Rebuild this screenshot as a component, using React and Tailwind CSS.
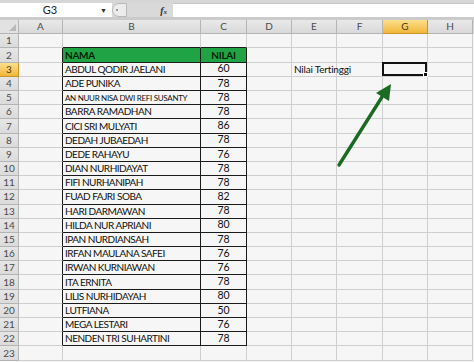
import React from 'react'

const COLS = ['A', 'B', 'C', 'D', 'E', 'F', 'G', 'H']

// data tabel nilai (baris 3 s/d 22)
const DATA = [
  ['ABDUL QODIR JAELANI', 60],
  ['ADE PUNIKA', 78],
  ['AN NUUR NISA DWI REFI SUSANTY', 78],
  ['BARRA RAMADHAN', 78],
  ['CICI SRI MULYATI', 86],
  ['DEDAH JUBAEDAH', 78],
  ['DEDE RAHAYU', 76],
  ['DIAN NURHIDAYAT', 78],
  ['FIFI NURHANIPAH', 78],
  ['FUAD FAJRI SOBA', 82],
  ['HARI DARMAWAN', 78],
  ['HILDA NUR APRIANI', 80],
  ['IPAN NURDIANSAH', 78],
  ['IRFAN MAULANA SAFEI', 76],
  ['IRWAN KURNIAWAN', 76],
  ['ITA ERNITA', 78],
  ['LILIS NURHIDAYAH', 80],
  ['LUTFIANA', 50],
  ['MEGA LESTARI', 76],
  ['NENDEN TRI SUHARTINI', 78],
]

const font = { fontFamily: 'Lato, "Open Sans", sans-serif' }

function FormulaBar() {
  return (
    <div>
      <div className="h-[3px] bg-[#d6d6d6]" />
      <div className="h-[14px] flex">
        <div className="w-[112px] bg-white flex items-center relative">
          <span className="w-[100px] text-center text-[11px] text-[#222]">G3</span>
          <span className="text-[7px] text-[#333] leading-none">▼</span>
        </div>
        <div className="w-[61px] bg-[#d9d9d9] flex items-center relative">
          <div className="w-[15px] h-[14px] rounded-l-full bg-[#ececec] border border-[#b8b8b8] flex items-center justify-start pl-[3px]">
            <span className="w-[2px] h-[2px] bg-[#999] block" />
          </div>
          <span
            className="ml-auto mr-[6px] text-[10px] italic font-bold text-[#333]"
            style={{ fontFamily: '"Liberation Serif", serif' }}
          >
            f<span className="text-[7px]">x</span>
          </span>
        </div>
        <div className="flex-1 bg-white border-t border-[#c8c8c8]" />
      </div>
      <div className="h-[3px] bg-[#cbcbcb]" />
    </div>
  )
}

function Cell({ row, col }) {
  const inTable = row >= 2 && row <= 22 && (col === 'B' || col === 'C')
  const base = 'border-r border-b bg-[#f6f6f6] border-[#cfcfcf] relative'

  // kiri tabel: garis kanan kolom A gelap
  const leftEdge = col === 'A' && row >= 2 && row <= 22
  const topEdge = row === 1 && (col === 'B' || col === 'C')

  if (row === 2 && inTable) {
    return (
      <div
        className={`border-r border-b border-[#1b1b1b] bg-[#1fa344] flex items-center text-[10px] font-bold text-[#0b1f0b] tracking-[-0.3px] ${
          col === 'B' ? 'pl-[2px]' : 'justify-center'
        }`}
      >
        {col === 'B' ? 'NAMA' : 'NILAI'}
      </div>
    )
  }

  if (inTable) {
    const [name, val] = DATA[row - 3]
    const small = name.length > 24
    return (
      <div
        className={`border-r border-b border-[#1b1b1b] bg-[#f6f6f6] flex items-center text-[#111] whitespace-nowrap overflow-hidden ${
          col === 'B' ? 'pl-[2px]' : 'justify-center text-[10.5px]'
        } ${col === 'B' && small ? 'text-[8px] tracking-[-0.3px]' : ''} ${
          col === 'B' && !small ? 'text-[10px] tracking-[-0.5px]' : ''
        }`}
      >
        {col === 'B' ? name : val}
      </div>
    )
  }

  let cls = base
  if (leftEdge) cls = 'border-b border-r border-b-[#cfcfcf] border-r-[#1b1b1b] bg-[#f6f6f6]'
  if (topEdge) cls = 'border-r border-b border-r-[#cfcfcf] border-b-[#1b1b1b] bg-[#f6f6f6]'

  return (
    <div className={`${cls} flex items-center`}>
      {row === 3 && col === 'E' && (
        <span className="relative z-10 pl-[2px] text-[10px] tracking-[-0.2px] text-[#111] whitespace-nowrap">
          Nilai Tertinggi
        </span>
      )}
      {row === 3 && col === 'G' && (
        <div className="absolute z-10 -left-[1px] -top-[1px] right-0 bottom-0 border-2 border-[#111]">
          <div className="absolute -right-[3px] -bottom-[3px] w-[5px] h-[5px] bg-[#111] border border-white" />
        </div>
      )}
    </div>
  )
}

export default function App() {
  const rows = Array.from({ length: 23 }, (_, i) => i + 1)

  return (
    <div className="w-[474px] h-[362px] overflow-hidden bg-[#f6f6f6] relative" style={font}>
      <FormulaBar />

      <div className="grid grid-cols-[19px_44px_138px_46px_45px_45px_46px_45px_45px_1px] grid-rows-[14.3px] auto-rows-[14.2px]">
        {/* pojok kiri atas */}
        <div className="border-r border-b border-[#b4b4b4] bg-[#e2e2e2] relative">
          <svg className="absolute right-[2px] bottom-[2px]" width="7" height="7" viewBox="0 0 7 7">
            <polygon points="7,0 7,7 0,7" fill="#b9b9b9" />
          </svg>
        </div>
        {COLS.map((c) => (
          <div
            key={c}
            className={`border-r border-b flex items-center justify-center text-[10px] ${
              c === 'G'
                ? 'bg-gradient-to-b from-[#fbe08a] to-[#f1b634] border-[#c9952a] text-[#4a3a10]'
                : 'bg-gradient-to-b from-[#e9e9e9] to-[#d9d9d9] border-[#b4b4b4] text-[#4b4b4b]'
            }`}
          >
            {c}
          </div>
        ))}
        <div className="bg-[#d9d9d9]" />

        {rows.map((r) => (
          <React.Fragment key={r}>
            <div
              className={`border-r border-b flex items-center justify-center text-[10px] ${
                r === 3
                  ? 'bg-gradient-to-b from-[#fbe08a] to-[#f1b634] border-[#c9952a] text-[#4a3a10]'
                  : 'bg-gradient-to-b from-[#e6e6e6] to-[#dbdbdb] border-[#b4b4b4] text-[#4b4b4b]'
              }`}
            >
              {r}
            </div>
            {COLS.map((c) => (
              <Cell key={c} row={r} col={c} />
            ))}
            <div className="bg-[#f6f6f6]" />
          </React.Fragment>
        ))}
      </div>

      {/* panah hijau menunjuk ke G3 */}
      <svg className="absolute left-0 top-0 pointer-events-none z-20" width="474" height="362">
        <line x1="339" y1="165" x2="382" y2="97" stroke="#1b6b22" strokeWidth="3.4" strokeLinecap="round" />
        <polygon points="391,84 376,93 389,101" fill="#1b6b22" />
      </svg>
    </div>
  )
}
